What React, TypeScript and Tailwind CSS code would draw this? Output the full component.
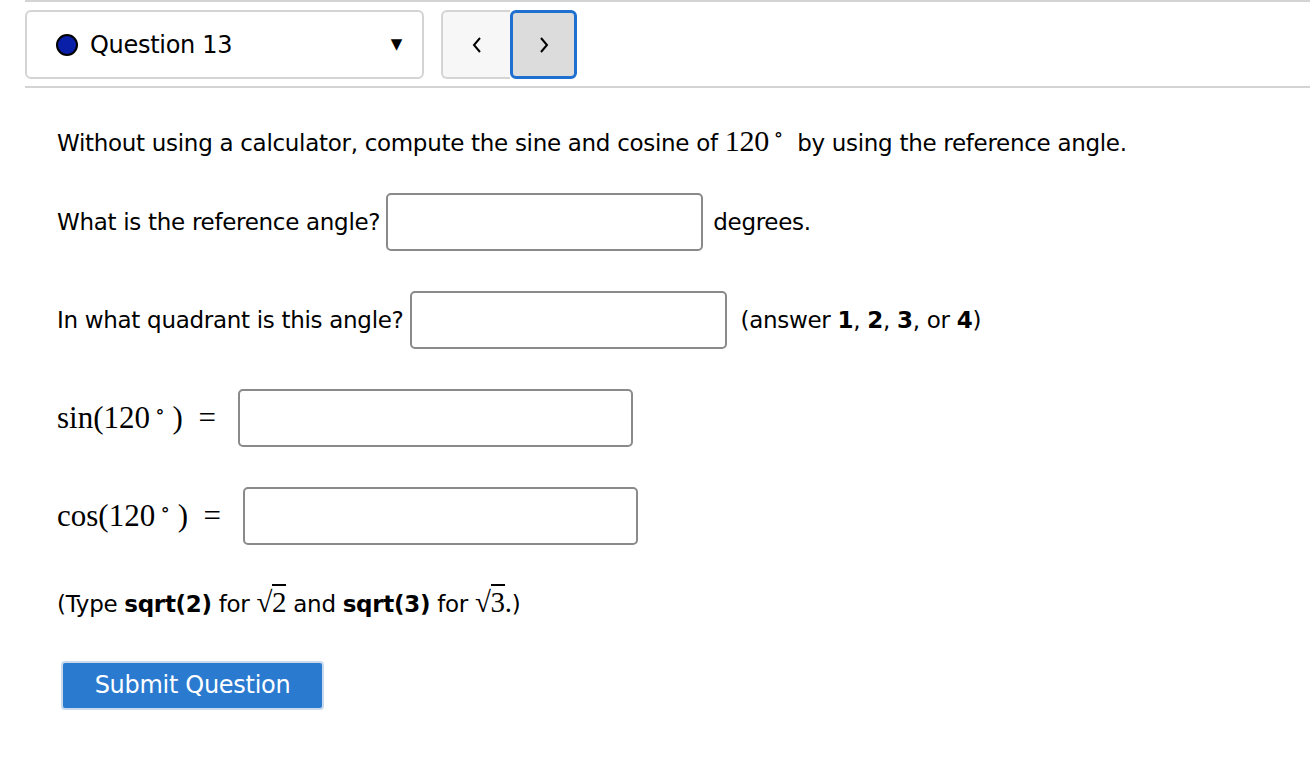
export default function App() {
  const input = "h-[58px] w-[317px] rounded-[5px] border-2 border-[#8a8a8a] bg-white"
  const math = { fontFamily: '"Liberation Serif", "DejaVu Serif", serif' }
  return (
    <div className="min-h-screen bg-white text-black text-[23px]" style={{ fontFamily: '"DejaVu Sans", Lato, sans-serif', letterSpacing: "-0.3px" }}>
      <div className="ml-[25px] border-t-2 border-[#d4d4d4]" />
      {/* nav */}
      <div className="ml-[25px] mt-[8px] flex items-center gap-[17px]">
        <div className="flex h-[69px] w-[399px] items-center rounded-[6px] border-2 border-[#d4d4d4] pl-[29px] pr-[20px]">
          <span className="h-[22px] w-[22px] rounded-full border-2 border-black bg-[#0a1fa8]" />
          <span className="ml-[12px] text-[24px]">Question 13</span>
          <span className="ml-auto text-[15px]">▼</span>
        </div>
        <div className="flex h-[69px]">
          <button className="flex w-[69px] items-center justify-center rounded-l-[6px] border-2 border-r-0 border-[#d4d4d4] bg-[#f7f7f7]">
            <svg width="12" height="18" viewBox="0 0 12 18"><path d="M9 2 L3 9 L9 16" fill="none" stroke="black" strokeWidth="2" /></svg>
          </button>
          <button className="flex w-[67px] items-center justify-center rounded-[6px] border-[3px] border-[#1f6fd1] bg-[#dcdcdc]">
            <svg width="12" height="18" viewBox="0 0 12 18"><path d="M3 2 L9 9 L3 16" fill="none" stroke="black" strokeWidth="2" /></svg>
          </button>
        </div>
      </div>
      <div className="ml-[25px] mt-[7px] border-t-2 border-[#d4d4d4]" />

      <div className="pl-[57px]">
        <p className="mt-[30px] flex items-baseline">
          Without using a calculator, compute the sine and cosine of&nbsp;
          <span style={math} className="text-[30px]">120<sup className="text-[20px]">&nbsp;∘</sup></span>
          &nbsp;&nbsp;by using the reference angle.
        </p>

        <div className="mt-[30px] flex items-center gap-[6px]">
          <span>What is the reference angle?</span>
          <div className={input} />
          <span className="ml-[4px]">degrees.</span>
        </div>

        <div className="mt-[40px] flex items-center gap-[6px]">
          <span>In what quadrant is this angle?</span>
          <div className={input} />
          <span className="ml-[8px]">(answer <b>1</b>, <b>2</b>, <b>3</b>, or <b>4</b>)</span>
        </div>

        <div className="mt-[40px] flex items-center gap-[22px]">
          <span style={math} className="text-[31px] tracking-normal">sin(120<sup className="text-[20px]">&nbsp;∘</sup>&nbsp;) &nbsp;=</span>
          <div className="h-[58px] w-[395px] rounded-[5px] border-2 border-[#8a8a8a]" />
        </div>

        <div className="mt-[40px] flex items-center gap-[22px]">
          <span style={math} className="text-[31px] tracking-normal">cos(120<sup className="text-[20px]">&nbsp;∘</sup>&nbsp;) &nbsp;=</span>
          <div className="h-[58px] w-[395px] rounded-[5px] border-2 border-[#8a8a8a]" />
        </div>

        <p className="mt-[36px]">
          (Type <b>sqrt(2)</b> for <span style={math} className="text-[29px]">√<span className="border-t-2 border-black">2</span></span> and <b>sqrt(3)</b> for <span style={math} className="text-[29px]">√<span className="border-t-2 border-black">3</span>.</span>)
        </p>

        <button className="ml-[4px] mt-[36px] h-[49px] w-[263px] rounded-[4px] border-2 border-[#c9d9ee] bg-[#2a7ad0] text-[24px] text-white">
          Submit Question
        </button>
      </div>
    </div>
  )
}
